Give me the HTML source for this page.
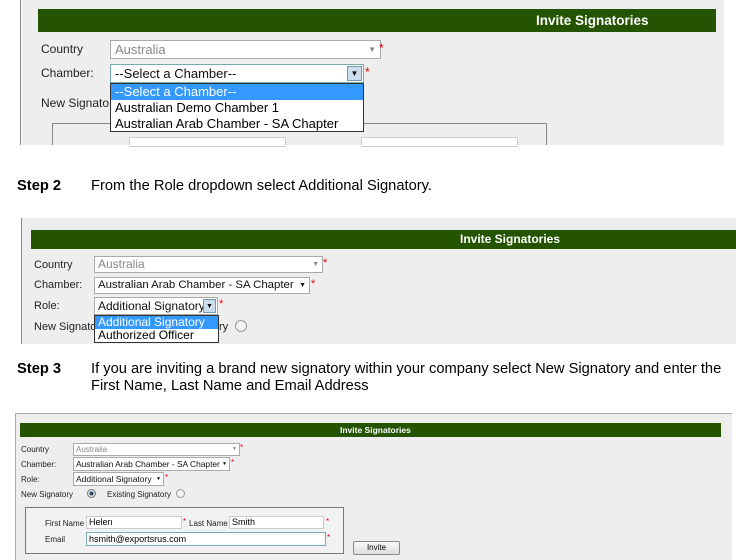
<!DOCTYPE html>
<html><head><style>
body{margin:0;width:736px;height:559px;background:#fff;position:relative;overflow:hidden;font-family:"Liberation Sans",Arial,sans-serif;}
.a{position:absolute;}
.bg{background:#eeeeee;}
.g{background:#245400;color:#fff;font-weight:bold;}
.sel{background:#fff;border:1px solid #aaa;box-sizing:border-box;white-space:nowrap;overflow:hidden;}
.t{white-space:nowrap;color:#222;}
.r{color:#e00;}
.hl{background:#3399ff;color:#fff;}
.p{font-size:14.7px;color:#000;white-space:nowrap;}
</style></head><body>
<!-- Shot 1 -->
<div class="a bg" style="left:22px;top:0;width:702px;height:145px"></div>
<div class="a" style="left:20px;top:0;width:1px;height:145px;background:#888"></div>
<div class="a g" style="left:38px;top:9px;width:678px;height:23px;font-size:13.5px;line-height:23px"><span class="a" style="left:498px">Invite Signatories</span></div>
<div class="a t" style="left:41px;top:42px;font-size:12px">Country</div>
<div class="a sel" style="left:110px;top:40px;width:271px;height:19px;font-size:13px;color:#888;padding-left:4px;line-height:17px">Australia<span class="a" style="right:4px;font-size:8px">▼</span></div>
<div class="a r" style="left:379px;top:41px;font-size:12px">*</div>
<div class="a t" style="left:41px;top:66px;font-size:12px">Chamber:</div>
<div class="a sel" style="left:110px;top:64px;width:254px;height:19px;font-size:13px;color:#111;padding-left:4px;line-height:17px;border-color:#7aa">--Select a Chamber--<span class="a" style="right:1px;top:1px;width:15px;height:15px;background:#cde;border:1px solid #79a;box-sizing:border-box;font-size:8px;text-align:center;line-height:14px">▼</span></div>
<div class="a r" style="left:365px;top:65px;font-size:12px">*</div>
<div class="a t" style="left:41px;top:96px;font-size:12px">New Signato</div>
<div class="a" style="left:52px;top:123px;width:493px;height:22px;border:1px solid #888;border-bottom:none"></div>
<div class="a" style="left:129px;top:137px;width:155px;height:8px;background:#fff;border:1px solid #ccc"></div>
<div class="a" style="left:361px;top:137px;width:155px;height:8px;background:#fff;border:1px solid #ccc"></div>
<div class="a" style="left:110px;top:83px;width:254px;height:49px;background:#fff;border:1px solid #333;box-sizing:border-box;font-size:13px;line-height:16px;color:#000">
<div class="hl" style="padding-left:4px">--Select a Chamber--</div><div style="padding-left:4px">Australian Demo Chamber 1</div><div style="padding-left:4px">Australian Arab Chamber - SA Chapter</div></div>
<div class="a" style="left:0;top:145px;width:736px;height:1px;background:#fff"></div>

<div class="a p" style="left:17px;top:178px;font-weight:bold">Step 2</div>
<div class="a p" style="left:91px;top:178px">From the Role dropdown select Additional Signatory.</div>

<!-- Shot 2 -->
<div class="a bg" style="left:22px;top:218px;width:714px;height:126px"></div>
<div class="a" style="left:21px;top:218px;width:1px;height:126px;background:#888"></div>
<div class="a g" style="left:31px;top:230px;width:705px;height:19px;font-size:12px;line-height:19px"><span class="a" style="left:429px">Invite Signatories</span></div>
<div class="a t" style="left:34px;top:259px;font-size:11px">Country</div>
<div class="a sel" style="left:94px;top:256px;width:229px;height:17px;font-size:12px;color:#888;padding-left:3px;line-height:15px">Australia<span class="a" style="right:3px;font-size:7px">▼</span></div>
<div class="a r" style="left:323px;top:257px;font-size:11px">*</div>
<div class="a t" style="left:34px;top:279px;font-size:11px">Chamber:</div>
<div class="a sel" style="left:94px;top:277px;width:216px;height:17px;font-size:11.4px;color:#111;padding-left:3px;line-height:15px">Australian Arab Chamber - SA Chapter<span class="a" style="right:3px;font-size:7px;background:#fff;padding-left:2px">▼</span></div>
<div class="a r" style="left:311px;top:278px;font-size:11px">*</div>
<div class="a t" style="left:34px;top:300px;font-size:11px">Role:</div>
<div class="a sel" style="left:94px;top:297px;width:124px;height:18px;font-size:12px;color:#111;padding-left:3px;line-height:16px">Additional Signatory<span class="a" style="right:1px;top:1px;width:13px;height:14px;background:#cde;border:1px solid #79a;box-sizing:border-box;font-size:7px;text-align:center;line-height:13px">▼</span></div>
<div class="a r" style="left:219px;top:298px;font-size:11px">*</div>
<div class="a t" style="left:34px;top:321px;font-size:11px">New Signato</div>
<div class="a t" style="left:219px;top:321px;font-size:11px">ry</div>
<div class="a" style="left:235px;top:320px;width:10px;height:10px;border-radius:50%;border:1px solid #999;background:#f4f4f4"></div>
<div class="a" style="left:94px;top:315px;width:125px;height:28px;background:#fff;border:1px solid #333;box-sizing:border-box;font-size:12px;line-height:13px;color:#000">
<div class="hl" style="padding-left:3px">Additional Signatory</div><div style="padding-left:3px">Authorized Officer</div></div>

<div class="a p" style="left:17px;top:361px;font-weight:bold">Step 3</div>
<div class="a p" style="left:91px;top:361px">If you are inviting a brand new signatory within your company select New Signatory and enter the</div>
<div class="a p" style="left:91px;top:378px">First Name, Last Name and Email Address</div>

<!-- Shot 3 -->
<div class="a bg" style="left:15px;top:413px;width:716px;height:146px;border-top:1px solid #aaa;border-left:1px solid #aaa"></div>
<div class="a g" style="left:20px;top:423px;width:701px;height:14px;font-size:8.5px;line-height:14px"><span class="a" style="left:320px">Invite Signatories</span></div>
<div class="a t" style="left:21px;top:445px;font-size:8px">Country</div>
<div class="a sel" style="left:73px;top:443px;width:167px;height:13px;font-size:8px;color:#888;padding-left:2px;line-height:11px">Australia<span class="a" style="right:2px;font-size:5px">▼</span></div>
<div class="a r" style="left:240px;top:443px;font-size:8px">*</div>
<div class="a t" style="left:21px;top:460px;font-size:8px">Chamber:</div>
<div class="a sel" style="left:73px;top:457px;width:157px;height:14px;font-size:8.4px;color:#111;padding-left:2px;line-height:12px">Australian Arab Chamber - SA Chapter<span class="a" style="right:2px;font-size:5px;background:#fff;padding-left:2px">▼</span></div>
<div class="a r" style="left:231px;top:458px;font-size:8px">*</div>
<div class="a t" style="left:21px;top:475px;font-size:8px">Role:</div>
<div class="a sel" style="left:73px;top:472px;width:91px;height:14px;font-size:8.5px;color:#111;padding-left:2px;line-height:12px">Additional Signatory<span class="a" style="right:2px;font-size:5px;background:#fff;padding-left:2px">▼</span></div>
<div class="a r" style="left:165px;top:473px;font-size:8px">*</div>
<div class="a t" style="left:21px;top:490px;font-size:8px">New Signatory</div>
<div class="a" style="left:87px;top:489px;width:7px;height:7px;border-radius:50%;border:1px solid #777;background:radial-gradient(#246 35%,#ddd 45%)"></div>
<div class="a t" style="left:107px;top:490px;font-size:8px">Existing Signatory</div>
<div class="a" style="left:176px;top:489px;width:7px;height:7px;border-radius:50%;border:1px solid #999;background:#f4f4f4"></div>
<div class="a" style="left:25px;top:507px;width:319px;height:47px;border:1px solid #777;box-sizing:border-box;background:#f2f2f2"></div>
<div class="a t" style="left:45px;top:519px;font-size:8px">First Name</div>
<div class="a sel" style="left:86px;top:516px;width:96px;height:13px;font-size:9px;padding-left:2px;line-height:11px;border-color:#ccc">Helen</div>
<div class="a r" style="left:183px;top:517px;font-size:8px">*</div>
<div class="a t" style="left:189px;top:519px;font-size:8px">Last Name</div>
<div class="a sel" style="left:229px;top:516px;width:95px;height:13px;font-size:9px;padding-left:2px;line-height:11px;border-color:#ccc">Smith</div>
<div class="a r" style="left:326px;top:517px;font-size:8px">*</div>
<div class="a t" style="left:45px;top:535px;font-size:8px">Email</div>
<div class="a sel" style="left:86px;top:532px;width:240px;height:14px;font-size:9px;padding-left:2px;line-height:12px;border-color:#7ab">hsmith@exportsrus.com</div>
<div class="a r" style="left:327px;top:533px;font-size:8px">*</div>
<div class="a" style="left:353px;top:541px;width:47px;height:14px;border:1px solid #888;border-radius:2px;background:linear-gradient(#fafafa,#ddd);box-sizing:border-box;font-size:8px;text-align:center;line-height:12px">Invite</div>
</body></html>
